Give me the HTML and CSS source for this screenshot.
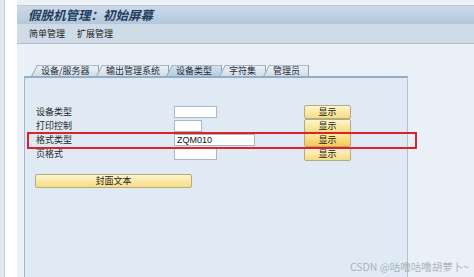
FILE: index.html
```html
<!DOCTYPE html>
<html lang="zh">
<head>
<meta charset="utf-8">
<link rel="stylesheet" href="styles.css">
</head>
<body>
<div class="app">
  <aside class="rail"></aside>
  <div class="main">
    <div class="topstrip"></div>
    <header class="titlebar"><h1>假脱机管理：初始屏幕</h1></header>
    <nav class="menubar"><span>简单管理</span><span>扩展管理</span></nav>
    <section class="content">
      <div class="workarea">
        <div class="tabs">
          <div class="tab t1">设备/服务器</div>
          <div class="tab t2">输出管理系统</div>
          <div class="tab t3 active">设备类型</div>
          <div class="tab t4">字符集</div>
          <div class="tab t5">管理员</div>
        </div>
        <div class="panel">
          <div class="form">
            <span class="label">设备类型</span><span class="field"><span class="input w42"></span></span><button class="btn">显示</button>
            <span class="label">打印控制</span><span class="field"><span class="input w27"></span></span><button class="btn">显示</button>
            <span class="label">格式类型</span><span class="field"><span class="input w80">ZQM010</span></span><button class="btn hot">显示</button>
            <span class="label">页格式</span><span class="field"><span class="input w42"></span></span><button class="btn">显示</button>
          </div>
          <button class="cover">封面文本</button>
          <div class="highlight"></div>
        </div>
      </div>
    </section>
  </div>
  <div class="watermark">CSDN @咕噜咕噜胡萝卜~</div>
</div>
</body>
</html>
```
FILE: styles.css
```css
* { box-sizing: border-box; }
html, body { margin: 0; padding: 0; }
body {
  width: 474px;
  height: 277px;
  overflow: hidden;
  font-family: "Noto Sans CJK SC", "Noto Sans", sans-serif;
  background: #eaf1f8;
}
.app {
  position: relative;
  display: flex;
  width: 474px;
  height: 277px;
}
.rail {
  width: 17px;
  flex: none;
  background: linear-gradient(to right, #e3e9ee 0, #e3e9ee 4px, #c4ced8 4px, #c4ced8 5px, #ffffff 5px, #ffffff 17px);
}
.main {
  flex: 1;
  display: flex;
  flex-direction: column;
}
.topstrip {
  height: 6px;
  background: #eef2f7;
  border-bottom: 1px solid #c2cbd5;
}
.titlebar {
  height: 18px;
  background: linear-gradient(#cbdae8, #b4c7dd);
  display: flex;
  align-items: center;
  padding-left: 11px;
}
.titlebar h1 {
  margin: 0;
  font-size: 12.5px;
  font-style: italic;
  font-weight: bold;
  color: #233c5c;
  letter-spacing: 0;
  line-height: 1;
}
.menubar {
  height: 20px;
  background: #cfdce8;
  border-bottom: 1px solid #b3bfcb;
  display: flex;
  align-items: center;
  gap: 12px;
  padding-left: 12px;
  font-size: 9px;
  color: #1b1b1b;
}
.content {
  flex: 1;
  display: flex;
  padding-top: 21px;
  padding-left: 7px;
  background: #e9f0f8;
}
.workarea {
  width: 384px;
  display: flex;
  flex-direction: column;
}
.tabs {
  display: flex;
  height: 11px;
  padding-left: 10px;
}
.tab {
  position: relative;
  height: 11px;
  font-size: 9px;
  line-height: 12px;
  color: #1d2a38;
  padding-left: 10px;
  background: linear-gradient(#eef2f6, #d3dde8);
  clip-path: polygon(6px 0, 100% 0, 100% 100%, 0 100%);
  border-right: 1px solid #8fa3b8;
  box-shadow: inset 0 1px 0 #a8b8c9;
  margin-left: -3px;
  white-space: nowrap;
}
.tab::after {
  content: "";
  position: absolute;
  left: 0;
  bottom: 0;
  width: 1px;
  height: 13px;
  background: #8ea2b7;
  transform-origin: bottom left;
  transform: rotate(28deg);
}
.tab.active {
  background: linear-gradient(#d6e3f0, #b7cbe1);
}
.t1 { width: 68px; }
.t2 { width: 73px; }
.t3 { width: 56px; }
.t4 { width: 47px; }
.t5 { width: 46px; }
.panel {
  position: relative;
  flex: 1;
  background: #dfeaf5;
  border-top: 2px solid #95acc6;
  border-left: 1px solid #a6b6c7;
  border-right: 1px solid #b7c3cf;
  padding: 27px 0 0 11px;
}
.form {
  display: grid;
  grid-template-columns: 138px 130px 47px;
  grid-auto-rows: 14px;
  align-items: center;
}
.label {
  font-size: 9px;
  color: #1f1f1f;
  line-height: 14px;
}
.field { display: flex; align-items: center; height: 14px; }
.input {
  display: block;
  height: 12px;
  background: #ffffff;
  border: 1px solid #a9b7c6;
  font-size: 9px;
  line-height: 10px;
  padding-left: 2px;
  color: #111;
  font-family: "Liberation Sans", sans-serif;
}
.w42 { width: 43px; }
.w27 { width: 28px; }
.w80 { width: 81px; }
.btn, .cover {
  font-family: "Noto Sans CJK SC", sans-serif;
  font-size: 9px;
  color: #222;
  padding: 0;
  height: 14px;
  line-height: 12px;
  background: linear-gradient(#fdf5cc, #f6dc83);
  border: 1px solid #b5aa86;
  border-radius: 2px;
}
.btn { width: 47px; }
.btn.hot { background: linear-gradient(#fde9a0, #f4c955); }
.cover {
  display: block;
  margin-top: 13px;
  margin-left: -1px;
  width: 157px;
}
.highlight {
  position: absolute;
  left: 2px;
  top: 54px;
  width: 390px;
  height: 17px;
  border: 2px solid #dd2329;
}
.watermark {
  position: absolute;
  right: 5px;
  bottom: 3px;
  font-size: 10.5px;
  color: rgba(150, 158, 168, 0.75);
  font-family: "Noto Sans CJK SC", sans-serif;
}
```
